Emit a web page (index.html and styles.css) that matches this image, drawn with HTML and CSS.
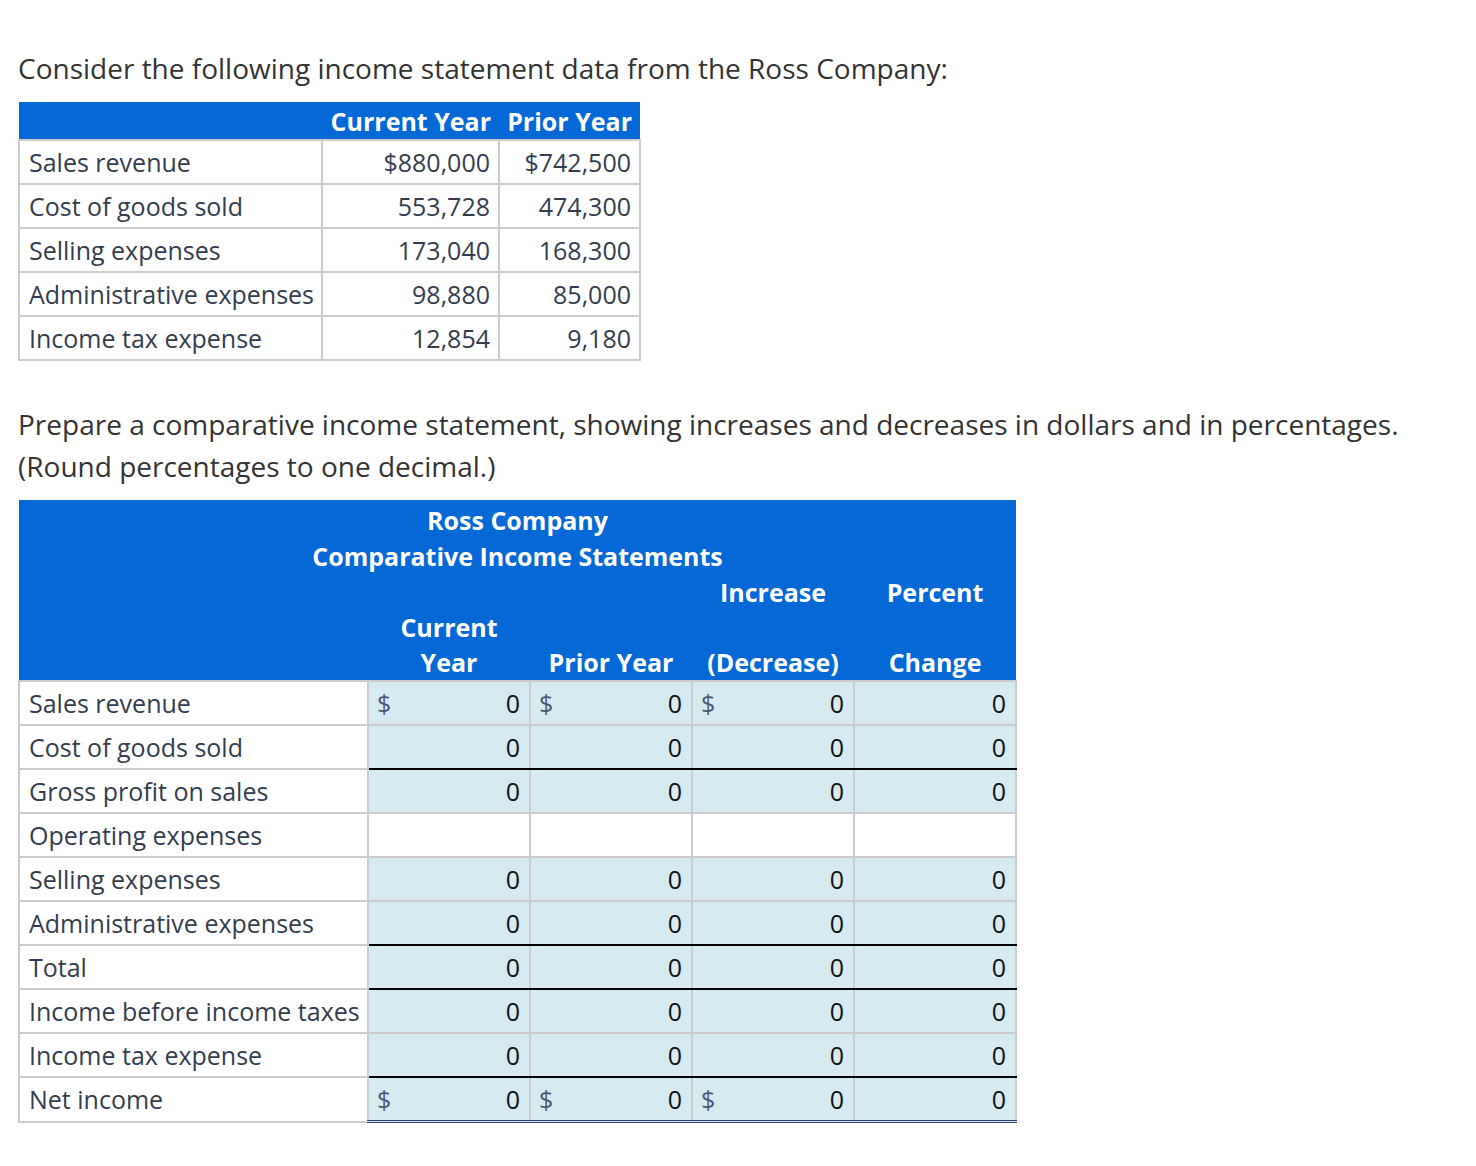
FILE: index.html
```
<!DOCTYPE html>
<html>
<head>
<meta charset="utf-8">
<link rel="stylesheet" href="styles.css">
</head>
<body>
<div class="page">
  <p class="intro">Consider the following income statement data from the Ross Company:</p>
  <table class="data">
    <colgroup><col class="c1"><col class="c2"><col class="c3"></colgroup>
    <thead>
      <tr><th></th><th>Current Year</th><th>Prior Year</th></tr>
    </thead>
    <tbody>
      <tr><td class="lbl">Sales revenue</td><td>$880,000</td><td>$742,500</td></tr>
      <tr><td class="lbl">Cost of goods sold</td><td>553,728</td><td>474,300</td></tr>
      <tr><td class="lbl">Selling expenses</td><td>173,040</td><td>168,300</td></tr>
      <tr><td class="lbl">Administrative expenses</td><td>98,880</td><td>85,000</td></tr>
      <tr><td class="lbl">Income tax expense</td><td>12,854</td><td>9,180</td></tr>
    </tbody>
  </table>

  <p class="task">Prepare a comparative income statement, showing increases and decreases in dollars and in percentages. (Round percentages to one decimal.)</p>

  <table class="cmp">
    <colgroup><col class="k1"><col class="k2"><col class="k2"><col class="k2"><col class="k2"></colgroup>
    <thead>
      <tr><th colspan="5" class="title">Ross Company<br>Comparative Income Statements</th></tr>
      <tr class="h2"><th></th><th></th><th></th><th>Increase</th><th>Percent</th></tr>
      <tr class="h3"><th></th><th>Current<br>Year</th><th>Prior Year</th><th>(Decrease)</th><th>Change</th></tr>
    </thead>
    <tbody>
      <tr><td class="lbl">Sales revenue</td><td class="v"><span class="cur">$</span>0</td><td class="v"><span class="cur">$</span>0</td><td class="v"><span class="cur">$</span>0</td><td class="v">0</td></tr>
      <tr class="ul"><td class="lbl">Cost of goods sold</td><td class="v">0</td><td class="v">0</td><td class="v">0</td><td class="v">0</td></tr>
      <tr><td class="lbl">Gross profit on sales</td><td class="v">0</td><td class="v">0</td><td class="v">0</td><td class="v">0</td></tr>
      <tr><td class="lbl">Operating expenses</td><td class="e"></td><td class="e"></td><td class="e"></td><td class="e"></td></tr>
      <tr><td class="lbl">Selling expenses</td><td class="v">0</td><td class="v">0</td><td class="v">0</td><td class="v">0</td></tr>
      <tr class="ul"><td class="lbl">Administrative expenses</td><td class="v">0</td><td class="v">0</td><td class="v">0</td><td class="v">0</td></tr>
      <tr class="ul"><td class="lbl">Total</td><td class="v">0</td><td class="v">0</td><td class="v">0</td><td class="v">0</td></tr>
      <tr><td class="lbl">Income before income taxes</td><td class="v">0</td><td class="v">0</td><td class="v">0</td><td class="v">0</td></tr>
      <tr class="ul"><td class="lbl">Income tax expense</td><td class="v">0</td><td class="v">0</td><td class="v">0</td><td class="v">0</td></tr>
      <tr class="dbl"><td class="lbl">Net income</td><td class="v"><span class="cur">$</span>0</td><td class="v"><span class="cur">$</span>0</td><td class="v"><span class="cur">$</span>0</td><td class="v">0</td></tr>
    </tbody>
  </table>
</div>
</body>
</html>
```

FILE: styles.css
```
html, body {
  margin: 0;
  padding: 0;
  background: #fff;
}
.page {
  padding: 47px 18px 40px 18px;
  font-family: "Open Sans", "Noto Sans", sans-serif;
  color: #333a44;
}
.intro, .task {
  margin: 0;
  font-size: 28px;
  line-height: 42px;
  color: #333;
}
.intro {
  margin-bottom: 13px;
}
.task {
  margin-top: 42px;
  margin-bottom: 13px;
  max-width: 1420px;
}
table {
  border-collapse: collapse;
  font-size: 25px;
}
.data {
  width: 621px;
  table-layout: fixed;
}
.c1 { width: 303px; }
.c2 { width: 177px; }
.c3 { width: 141px; }
.data th {
  background: #0568d7;
  color: #fff;
  font-weight: 700;
  text-align: right;
  height: 36px;
  padding: 1px 8px 0 8px;
  line-height: 36px;
  border: 0;
}
.data td {
  border: 2px solid #cccccc;
  padding: 8px 8px;
  line-height: 26px;
  text-align: right;
  color: #333d4d;
  white-space: nowrap;
}
.data td.lbl, .cmp td.lbl {
  text-align: left;
  padding-left: 9px;
  color: #333d4d;
}
.cmp {
  width: 998px;
  table-layout: fixed;
}
.k1 { width: 349px; }
.k2 { width: 162px; }
.cmp thead th {
  background: #0568d7;
  color: #fff;
  font-weight: 700;
  border: 0;
  padding: 0;
  line-height: 36px;
  text-align: center;
  vertical-align: bottom;
}
.cmp thead th.title {
  padding-top: 2px;
}
.cmp thead tr.h3 th {
  line-height: 35px;
}
.cmp td {
  border: 2px solid #cccccc;
  padding: 8px 9px 8px 8px;
  line-height: 26px;
  white-space: nowrap;
}
.cmp td.v {
  background: #d6eaf1;
  text-align: right;
  color: #111;
}
.cmp td.e {
  background: #fff;
}
.cur {
  float: left;
  color: #4b5872;
}
.cmp tr.ul td.v {
  border-bottom-color: #000;
}
.cmp tr.dbl td.v {
  border-bottom: 3px double #2c4270;
}
```
